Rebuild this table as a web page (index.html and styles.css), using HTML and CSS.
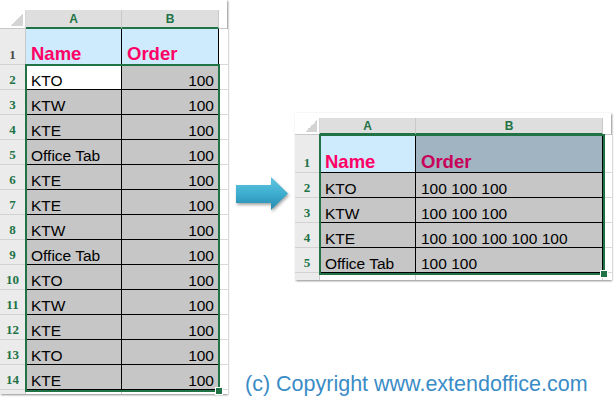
FILE: index.html
```html
<!DOCTYPE html>
<html>
<head>
<meta charset="utf-8">
<link rel="stylesheet" href="styles.css">
</head>
<body>
<div class="page">
  <div class="shot shot-left">
    <div class="sheet sheet-left">
      <div class="corner"><span class="tri"></span></div>
      <div class="ch sel">A</div><div class="ch sel">B</div><div class="ch blank"></div>

      <div class="rh plain">1</div><div class="c hdr blue">Name</div><div class="c hdr blue">Order</div><div class="c x"></div>

      <div class="rh">2</div><div class="c active">KTO</div><div class="c g num">100</div><div class="c x"></div>
      <div class="rh">3</div><div class="c g">KTW</div><div class="c g num">100</div><div class="c x"></div>
      <div class="rh">4</div><div class="c g">KTE</div><div class="c g num">100</div><div class="c x"></div>
      <div class="rh">5</div><div class="c g">Office Tab</div><div class="c g num">100</div><div class="c x"></div>
      <div class="rh">6</div><div class="c g">KTE</div><div class="c g num">100</div><div class="c x"></div>
      <div class="rh">7</div><div class="c g">KTE</div><div class="c g num">100</div><div class="c x"></div>
      <div class="rh">8</div><div class="c g">KTW</div><div class="c g num">100</div><div class="c x"></div>
      <div class="rh">9</div><div class="c g">Office Tab</div><div class="c g num">100</div><div class="c x"></div>
      <div class="rh">10</div><div class="c g">KTO</div><div class="c g num">100</div><div class="c x"></div>
      <div class="rh">11</div><div class="c g">KTW</div><div class="c g num">100</div><div class="c x"></div>
      <div class="rh">12</div><div class="c g">KTE</div><div class="c g num">100</div><div class="c x"></div>
      <div class="rh">13</div><div class="c g">KTO</div><div class="c g num">100</div><div class="c x"></div>
      <div class="rh">14</div><div class="c g">KTE</div><div class="c g num">100</div><div class="c x"></div>

      <div class="rh tail"></div><div class="c tail"></div><div class="c tail"></div><div class="c tail x"></div>

      <div class="selection sel-left"><span class="handle"></span></div>
    </div>
  </div>

  <div class="right-col">
    <div class="pair">
      <svg class="arrow" width="58" height="42" viewBox="0 0 58 42">
        <defs>
          <linearGradient id="ag" x1="0" y1="0" x2="0" y2="1">
            <stop offset="0" stop-color="#62c6e0"/>
            <stop offset="0.5" stop-color="#3eaed0"/>
            <stop offset="1" stop-color="#2689ad"/>
          </linearGradient>
        </defs>
        <path d="M2 13 H37 V5 L54 21.5 L37 38 V31 H2 Z" fill="url(#ag)"/>
      </svg>

      <div class="shot shot-right">
        <div class="sheet sheet-right">
          <div class="corner"><span class="tri"></span></div>
          <div class="ch sel">A</div><div class="ch sel">B</div><div class="ch blank"></div>

          <div class="rh">1</div><div class="c hdr blue">Name</div><div class="c hdr slate">Order</div><div class="c x"></div>

          <div class="rh">2</div><div class="c g">KTO</div><div class="c g">100 100 100</div><div class="c x"></div>
          <div class="rh">3</div><div class="c g">KTW</div><div class="c g">100 100 100</div><div class="c x"></div>
          <div class="rh">4</div><div class="c g">KTE</div><div class="c g">100 100 100 100 100</div><div class="c x"></div>
          <div class="rh">5</div><div class="c g">Office Tab</div><div class="c g">100 100</div><div class="c x"></div>

          <div class="rh tail"></div><div class="c tail"></div><div class="c tail"></div><div class="c tail x"></div>

          <div class="selection sel-right"><span class="handle"></span></div>
        </div>
      </div>
    </div>
    <div class="copyright">(c) Copyright www.extendoffice.com</div>
  </div>
</div>
</body>
</html>
```

FILE: styles.css
```css
html, body {
  margin: 0;
  padding: 0;
  background: #ffffff;
}

body {
  width: 616px;
  height: 402px;
  overflow: hidden;
  font-family: "Liberation Sans", Arial, sans-serif;
}

.page {
  display: flex;
  align-items: flex-start;
}

.shot {
  background: #ffffff;
  box-shadow: 1px 1px 2px rgba(0, 0, 0, 0.45);
}

.shot-left {
  padding-top: 10px;
  width: 227px;
}

.sheet {
  display: grid;
  position: relative;
  background: #ffffff;
}

.sheet-left {
  grid-template-columns: 26px 96px 97px 8px;
  grid-template-rows: 19px 36px repeat(13, 25px) 4px;
}

.sheet-right {
  grid-template-columns: 25px 96px 187px 8px;
  grid-template-rows: 17px 38px repeat(4, 25px) 7px;
}

.sheet > div {
  box-sizing: border-box;
}

/* corner cell */
.corner {
  display: flex;
  justify-content: flex-end;
  align-items: flex-end;
  padding: 0 2px 2px 0;
  border-bottom: 1px solid #c8c8c8;
  border-right: 1px solid #d6d6d6;
  background: #ffffff;
}

.tri {
  width: 12px;
  height: 12px;
  background: linear-gradient(to bottom right, transparent 50%, #d4d4d4 50%);
}

/* column headers */
.ch {
  display: flex;
  align-items: center;
  justify-content: center;
  background: #dedede;
  border-right: 1px solid #c9c9c9;
  border-bottom: 1px solid #c8c8c8;
  font-size: 12px;
  font-weight: bold;
  color: #217346;
  padding-top: 1px;
}

.ch.sel {
  border-bottom: 2px solid #217346;
}

.ch.blank {
  background: #ffffff;
  border-right: none;
}

/* row headers */
.rh {
  display: flex;
  align-items: flex-end;
  justify-content: center;
  background: #ebebeb;
  border-bottom: 1px solid #d2d2d2;
  border-right: 1px solid #c8c8c8;
  font-family: "Liberation Serif", "Times New Roman", serif;
  font-size: 13px;
  font-weight: bold;
  color: #217346;
  line-height: 15px;
  padding-bottom: 2px;
}

.rh.plain {
  color: #4a4a4a;
}

.rh.tail {
  border-bottom: none;
}

/* cells */
.c {
  display: flex;
  align-items: flex-end;
  padding: 0 4px 0 5px;
  font-size: 15.5px;
  line-height: 17px;
  color: #000000;
  white-space: nowrap;
  border-right: 1px solid #000000;
  border-bottom: 1px solid #000000;
}

.c.num {
  justify-content: flex-end;
}

.c.g {
  background: #c6c6c6;
}

.c.active {
  background: #ffffff;
}

.c.hdr {
  font-size: 18.5px;
  font-weight: bold;
  line-height: 20px;
  color: #ff0066;
}

.c.blue {
  background: #cdebfd;
}

.c.slate {
  background: #a1b4c1;
  color: #c8005a;
}

.c.x {
  background: #ffffff;
  border-right: none;
  border-bottom: 1px solid #dadada;
}

.c.tail {
  background: #ffffff;
  border-bottom: none;
  border-right: 1px solid #d0d0d0;
}

.c.tail.x {
  border-right: none;
}

/* selection overlay */
.selection {
  position: absolute;
  box-sizing: border-box;
  border: 2px solid #217346;
  pointer-events: none;
}

.sel-left {
  left: 25px;
  top: 54px;
  width: 195px;
  height: 328px;
}

.sel-right {
  left: 24px;
  top: 16px;
  width: 286px;
  height: 141px;
}

.handle {
  position: absolute;
  right: -5px;
  bottom: -5px;
  width: 6px;
  height: 6px;
  background: #217346;
  border: 1px solid #ffffff;
}

/* right column */
.right-col {
  display: flex;
  flex-direction: column;
  padding-top: 113px;
  margin-left: 7px;
}

.pair {
  display: flex;
  align-items: flex-start;
}

.arrow {
  display: block;
  margin-top: 59px;
  filter: drop-shadow(1px 2px 1.5px rgba(0, 0, 0, 0.35));
}

.shot-right {
  padding-top: 5px;
  margin-left: 3px;
}

.copyright {
  margin-top: 92px;
  margin-left: 11px;
  font-size: 21.5px;
  line-height: 24px;
  color: #3a8cc6;
  white-space: nowrap;
}
```
